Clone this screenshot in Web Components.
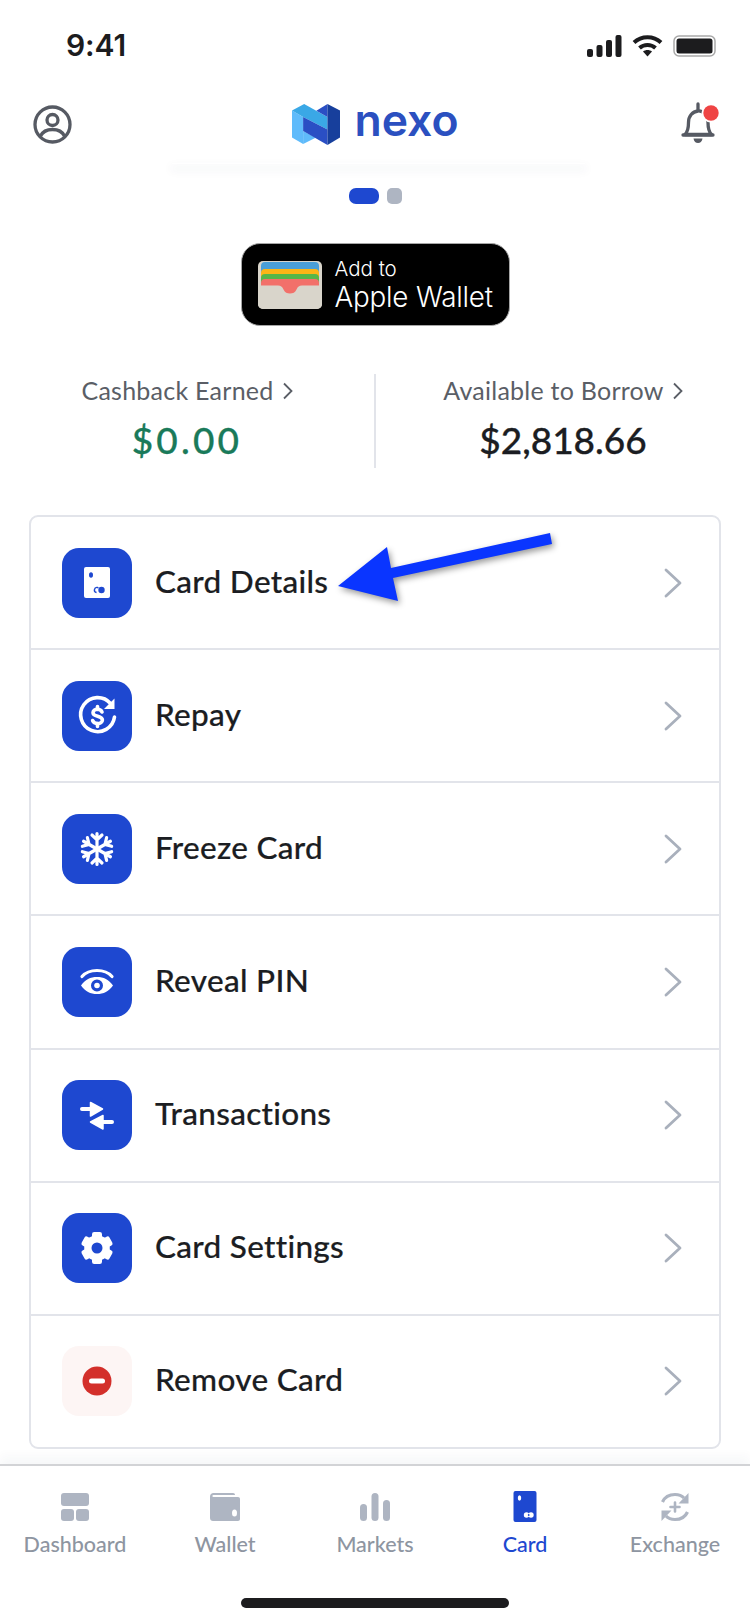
<!DOCTYPE html>
<html lang="en">
<head>
<meta charset="utf-8">
<title>Nexo Card</title>
<style>
  html, body { margin: 0; background: #fff; }
  body { font-family: Lato, "Liberation Sans", sans-serif; color: #1b1d22; }
</style>
</head>
<body>
<card-screen>
  <status-bar></status-bar>
  <app-header></app-header>
  <pager-dots></pager-dots>
  <wallet-button></wallet-button>

  <stat-pair>
    <stat-block slot="left" label="Cashback Earned" value="$0.00" tone="green"></stat-block>
    <stat-block slot="right" label="Available to Borrow" value="$2,818.66"></stat-block>
  </stat-pair>

  <menu-card>
    <menu-row>
      <svg slot="icon" viewBox="0 0 70 70" width="70" height="70">
        <rect x="22" y="19" width="26" height="31" rx="2" fill="#fff"/>
        <ellipse cx="29" cy="27" rx="2" ry="2.800" fill="#1e48d0"/>
        <circle cx="35" cy="42" r="2.600" fill="none" stroke="#1e48d0" stroke-width="1.400" stroke-dasharray="9 8" transform="rotate(100 35 42)"/>
        <circle cx="39.500" cy="42" r="3.200" fill="#1e48d0"/>
      </svg>
      Card Details
    </menu-row>
    <menu-row>
      <svg slot="icon" viewBox="0 0 70 70" width="70" height="70">
        <path d="M48.500 22.500A17 17 0 1 0 52.500 36" fill="none" stroke="#fff" stroke-width="3.600" stroke-linecap="round"/>
        <path d="M52.500 17.500v10.500h-10.500z" fill="#fff"/>
        <path d="M40 31c-.8-1.800-2.500-2.700-4.500-2.700-2.600 0-4.500 1.300-4.500 3.400 0 4.700 9.400 2.400 9.400 7.200 0 2.200-2.100 3.600-4.800 3.600-2.300 0-4.200-1-5-3" fill="none" stroke="#fff" stroke-width="3.600" stroke-linecap="round"/>
        <path d="M35.500 25.500v3M35.500 42.500v3" stroke="#fff" stroke-width="3.600" stroke-linecap="round"/>
      </svg>
      Repay
    </menu-row>
    <menu-row>
      <svg slot="icon" viewBox="0 0 70 70" width="70" height="70">
        <g fill="none" stroke="#fff" stroke-width="3.200" stroke-linecap="round" stroke-linejoin="round">
          <path d="M35 35V19.500M30 21l5 4.800 5-4.800"/>
          <path transform="rotate(60 35 35)" d="M35 35V19.500M30 21l5 4.800 5-4.800"/>
          <path transform="rotate(120 35 35)" d="M35 35V19.500M30 21l5 4.800 5-4.800"/>
          <path transform="rotate(180 35 35)" d="M35 35V19.500M30 21l5 4.800 5-4.800"/>
          <path transform="rotate(240 35 35)" d="M35 35V19.500M30 21l5 4.800 5-4.800"/>
          <path transform="rotate(300 35 35)" d="M35 35V19.500M30 21l5 4.800 5-4.800"/>
        </g>
      </svg>
      Freeze Card
    </menu-row>
    <menu-row>
      <svg slot="icon" viewBox="0 0 70 70" width="70" height="70">
        <path d="M20 29.500C24 25 29 23.500 35 23.500s11 1.500 15 6" fill="none" stroke="#fff" stroke-width="3.200" stroke-linecap="round"/>
        <path fill-rule="evenodd" fill="#fff" d="M19 38.500C23 32.500 28.500 30 35 30s12 2.500 16 8.500C47 44.500 41.500 47 35 47s-12-2.500-16-8.500zM35 32.500a6 6 0 1 0 0 12 6 6 0 0 0 0-12z"/>
        <circle cx="35" cy="38.500" r="2.800" fill="#fff"/>
      </svg>
      Reveal PIN
    </menu-row>
    <menu-row>
      <svg slot="icon" viewBox="0 0 70 70" width="70" height="70">
        <path d="M20 29h10M50 42H41" stroke="#fff" stroke-width="4" stroke-linecap="round"/>
        <path d="M28.500 22.500 40.500 29l-12 7zM41 35.500 28.500 42 41 49z" fill="#fff" stroke="#fff" stroke-width="1.500" stroke-linejoin="round"/>
      </svg>
      Transactions
    </menu-row>
    <menu-row>
      <svg slot="icon" viewBox="0 0 70 70" width="70" height="70">
        <circle cx="35" cy="35" r="12.800" fill="#fff"/>
        <g fill="#fff">
          <rect x="30" y="19" width="10" height="32" rx="2.200"/>
          <rect x="30" y="19" width="10" height="32" rx="2.200" transform="rotate(60 35 35)"/>
          <rect x="30" y="19" width="10" height="32" rx="2.200" transform="rotate(120 35 35)"/>
        </g>
        <circle cx="35" cy="35" r="5.500" fill="#1e48d0"/>
      </svg>
      Card Settings
    </menu-row>
    <menu-row danger>
      <svg slot="icon" viewBox="0 0 70 70" width="70" height="70">
        <circle cx="35" cy="35" r="14.500" fill="#d32f2a"/>
        <rect x="27" y="32.500" width="16" height="5" rx="2.500" fill="#fff"/>
      </svg>
      Remove Card
    </menu-row>
  </menu-card>

  <tab-bar>
    <tab-item label="Dashboard">
      <svg viewBox="0 0 40 34" width="40" height="34" fill="#aeb5c2">
        <rect x="6" y="3" width="28" height="13" rx="3"/>
        <rect x="6" y="19" width="13" height="12" rx="3"/>
        <rect x="21" y="19" width="13" height="12" rx="3"/>
      </svg>
    </tab-item>
    <tab-item label="Wallet">
      <svg viewBox="0 0 40 34" width="40" height="34">
        <path fill="#aeb5c2" fill-rule="evenodd" d="M5 6.500C5 4.500 6.500 3 8.500 3H28c1.300 0 2 .8 2 2H8.500C7 5 7 7 8.500 7H33c1.200 0 2 .8 2 2v20c0 1.200-.8 2-2 2H8c-1.700 0-3-1.300-3-3z"/>
        <ellipse cx="29.500" cy="23" rx="2.500" ry="3.500" fill="#fff"/>
      </svg>
    </tab-item>
    <tab-item label="Markets">
      <svg viewBox="0 0 40 34" width="40" height="34" fill="#aeb5c2">
        <rect x="5" y="14" width="7" height="17" rx="3.500"/>
        <rect x="16.500" y="3" width="7" height="28" rx="3.500"/>
        <rect x="28" y="10" width="7" height="21" rx="3.500"/>
      </svg>
    </tab-item>
    <tab-item label="Card" active>
      <svg viewBox="0 0 40 34" width="40" height="34">
        <rect x="8.500" y="1" width="23" height="31" rx="2" fill="#1e48d0"/>
        <ellipse cx="14.500" cy="8" rx="1.700" ry="2.700" fill="#fff"/>
        <circle cx="21.500" cy="25" r="2.700" fill="#fff"/>
        <circle cx="26" cy="25" r="2.700" fill="#fff"/>
        <circle cx="23.700" cy="25" r=".9" fill="#1e48d0"/>
      </svg>
    </tab-item>
    <tab-item label="Exchange">
      <svg viewBox="0 0 40 34" width="40" height="34" fill="none" stroke="#aeb5c2">
        <path d="M7.500 12C10 6.500 14.500 4.500 20 4.500c4 0 7 1.300 9 3.500" stroke-width="3.200"/>
        <path d="M33.500 3v10.500H23.500z" fill="#aeb5c2" stroke="none"/>
        <path d="M32.500 22C30 27.500 25.500 29.500 20 29.500c-4 0-7-1.300-9-3.500" stroke-width="3.200"/>
        <path d="M6.500 31V20.500H16.500z" fill="#aeb5c2" stroke="none"/>
        <path d="M20 12.500v9M15.500 17h9" stroke-width="2.600" stroke-linecap="round"/>
      </svg>
    </tab-item>
  </tab-bar>

  <home-indicator></home-indicator>
  <pointer-arrow></pointer-arrow>
</card-screen>

<script>
/** Small helper: every element below just stamps its markup into an open shadow root. */
class ShadowElement extends HTMLElement {
    constructor() {
        super();
        this.attachShadow({ mode: 'open' });
    }
    connectedCallback() {
        this.shadowRoot.innerHTML = this.markup();
    }
    markup() { return ''; }
}

class CardScreen extends ShadowElement {
    markup() {
        return `
        <style>
            :host {
                display: flex;
                flex-direction: column;
                position: relative;
                width: 750px;
                height: 1624px;
                overflow: hidden;
                background: #fff;
            }
        </style>
        <slot></slot>`;
    }
}

class StatusBar extends ShadowElement {
    markup() {
        return `
        <style>
            :host {
                display: flex;
                align-items: center;
                justify-content: space-between;
                height: 46px;
                padding: 23px 34px 11px 66px;
                flex: none;
            }
            .time {
                font: 600 30px/1 Inter, "Liberation Sans", sans-serif;
                color: #1c1c1e;
                letter-spacing: -.1px;
                margin-top: -2px;
            }
            .icons { display: flex; align-items: center; gap: 10px; }
            svg { display: block; }
        </style>
        <span class="time">9:41</span>
        <div class="icons">
            <svg width="35" height="22" viewBox="0 0 35 22" fill="#1c1c1e">
                <rect x="0" y="14" width="6" height="8" rx="2"/>
                <rect x="9.500" y="10" width="6" height="12" rx="2"/>
                <rect x="19" y="5" width="6" height="17" rx="2"/>
                <rect x="28.500" y="0" width="6" height="22" rx="2"/>
            </svg>
            <svg width="31" height="22" viewBox="0 0 31 22" fill="none" stroke="#1c1c1e" stroke-width="4">
                <path d="M2 7.500C9.500 .5 21.500 .5 29 7.500"/>
                <path d="M7.500 13c4.500-4 11.500-4 16 0"/>
                <path d="M11 16.500l4.500 5 4.500-5c-2.500-2-6.500-2-9 0z" fill="#1c1c1e" stroke="none"/>
            </svg>
            <svg width="43" height="22" viewBox="0 0 43 22">
                <rect x="1" y="1" width="41" height="20" rx="5" fill="none" stroke="#a9a9a9" stroke-width="1.500"/>
                <rect x="3.500" y="3.500" width="36" height="15" rx="2.500" fill="#1c1c1e"/>
            </svg>
        </div>`;
    }
}

class AppHeader extends ShadowElement {
    markup() {
        return `
        <style>
            :host {
                display: flex;
                align-items: center;
                justify-content: space-between;
                position: relative;
                height: 84px;
                box-sizing: border-box;
                padding: 4px 34px 0 33px;
                flex: none;
            }
            svg { display: block; }
            .logo { display: flex; align-items: center; gap: 14px; margin-left: -1px; }
            .word {
                font: 600 44.500px/1 Inter, Lato, sans-serif;
                color: #2b50c0;
                margin-top: -8px;
            }
            /* soft shadow under the header, narrower than the page */
            .shade {
                position: absolute;
                left: 172px;
                right: 165px;
                bottom: 0;
                height: 1px;
                box-shadow: 0 5px 10px 2px rgba(40, 50, 90, .055);
            }
        </style>
        <svg width="39" height="39" viewBox="0 0 39 39" fill="none" stroke="#565a63" stroke-width="3.300">
            <circle cx="19.500" cy="19.500" r="17.500"/>
            <circle cx="19.500" cy="15" r="5.500"/>
            <path d="M7.500 31c2.500-5 7-6.500 12-6.500s9.500 1.500 12 6.500"/>
        </svg>
        <div class="logo">
            <svg width="48" height="41" viewBox="20 12 138 126" preserveAspectRatio="none">
                <path d="M20 32 52 52V135L20 115Z" fill="#5fbbfb"/>
                <path d="M52 95 88 116 52 135Z" fill="#5fbbfb"/>
                <path d="M20 32 55 12 122 52V90L52 52Z" fill="#3aa8e6"/>
                <path d="M52 52 122 90V138L52 95Z" fill="#2a4fc4"/>
                <path d="M90 33 122 12V52Z" fill="#2a4fc4"/>
                <path d="M122 12 158 32V115L122 138Z" fill="#173f9c"/>
            </svg>
            <span class="word">nexo</span>
        </div>
        <svg width="40" height="44" viewBox="0 0 40 44" style="margin:-2px -4px 0 0">
            <path d="M5 33.500c3-3 3.500-6 3.500-12 0-6.500 4-11 9.500-11.500s10 5 10 11.500c0 6 .5 9 3.500 12z" fill="none" stroke="#565a63" stroke-width="3.300" stroke-linejoin="round"/>
            <path d="M3 34h30" stroke="#565a63" stroke-width="3.300" stroke-linecap="round"/>
            <path d="M18 3v6" stroke="#565a63" stroke-width="3.300" stroke-linecap="round"/>
            <path d="M13.500 37.500h9c-.5 3-2.200 4.500-4.500 4.500s-4-1.500-4.500-4.500z" fill="#565a63"/>
            <circle cx="31" cy="12" r="9.500" fill="#fff"/>
            <circle cx="31" cy="12" r="7.700" fill="#ef4444"/>
        </svg>
        <div class="shade"></div>`;
    }
}

class PagerDots extends ShadowElement {
    markup() {
        return `
        <style>
            :host { display: flex; justify-content: center; gap: 8px; margin: 24px 0 0 0; flex: none; }
            i { display: block; height: 16px; border-radius: 7px; }
            .on { width: 30px; background: #1e48d0; }
            .off { width: 15px; background: #aeb5c2; border-radius: 5px; }
        </style>
        <i class="on"></i><i class="off"></i>`;
    }
}

class WalletButton extends ShadowElement {
    markup() {
        return `
        <style>
            :host {
                display: flex;
                align-items: center;
                gap: 13px;
                box-sizing: border-box;
                width: 269px;
                height: 83px;
                margin: 39px auto 0;
                padding: 0 0 0 16px;
                background: #000;
                border: 1.500px solid #a6a6a6;
                border-radius: 19px;
                flex: none;
                color: #fff;
                font-family: Inter, "Liberation Sans", sans-serif;
                font-weight: 300;
            }
            .text { display: flex; flex-direction: column; }
            .small { font-size: 20.500px; line-height: 24px; margin-top: 1px; }
            .big { font-size: 27.800px; line-height: 32px; letter-spacing: -.2px; }
            svg { display: block; flex: none; }
        </style>
        <svg width="64" height="48" viewBox="0 0 64 48">
            <rect x="0" y="0" width="64" height="48" rx="5" fill="#d9d5cb"/>
            <path d="M3 12V5a4 4 0 0 1 4-4h50a4 4 0 0 1 4 4v7z" fill="#4a9fd8"/>
            <path d="M3 20v-8a4 4 0 0 1 4-4h50a4 4 0 0 1 4 4v8z" fill="#fbb516"/>
            <path d="M3 25v-8a4 4 0 0 1 4-4h50a4 4 0 0 1 4 4v8z" fill="#55b648"/>
            <path d="M3 34v-12a4 4 0 0 1 4-4h50a4 4 0 0 1 4 4v12z" fill="#f2706a"/>
            <path d="M0 24.500H20c3 0 4 1 5.500 4 1.500 3 3.500 4 6.500 4s5-1 6.500-4c1.500-3 2.500-4 5.500-4H64V43a5 5 0 0 1-5 5H5a5 5 0 0 1-5-5z" fill="#d9d5cb"/>
        </svg>
        <div class="text">
            <span class="small">Add to</span>
            <span class="big">Apple Wallet</span>
        </div>`;
    }
}

class StatPair extends ShadowElement {
    markup() {
        return `
        <style>
            :host {
                display: grid;
                grid-template-columns: 1fr 2px 1fr;
                height: 94px;
                margin-top: 48px;
                flex: none;
            }
            .rule { background: #e2e4ea; }
        </style>
        <slot name="left"></slot>
        <div class="rule"></div>
        <slot name="right"></slot>`;
    }
}

class StatBlock extends ShadowElement {
    markup() {
        const green = this.getAttribute('tone') === 'green';
        return `
        <style>
            :host {
                display: flex;
                flex-direction: column;
                align-items: center;
                gap: 13px;
                padding-top: 1px;
            }
            .label {
                display: flex;
                align-items: center;
                gap: 9px;
                font-size: 25px;
                line-height: 30px;
                letter-spacing: .25px;
                color: #5a5e66;
            }
            .value {
                font-size: 37px;
                line-height: 44px;
                font-weight: 500;
                letter-spacing: ${green ? '3.200px' : '0'};
                color: ${green ? '#1a7a5a' : '#1b1d22'};
                -webkit-text-stroke: .3px currentColor;
            }
            svg { display: block; margin-top: 2px; }
        </style>
        <div class="label">
            <span>${this.getAttribute('label')}</span>
            <svg width="10" height="18" viewBox="0 0 10 18" fill="none" stroke="#5a5e66" stroke-width="1.800"><path d="M1 1.500 8.500 9 1 16.500"/></svg>
        </div>
        <div class="value">${this.getAttribute('value')}</div>`;
    }
}

class MenuCard extends ShadowElement {
    markup() {
        return `
        <style>
            :host {
                display: flex;
                flex-direction: column;
                box-sizing: border-box;
                height: 934px;
                margin: 47px 29px 0 29px;
                border: 2px solid #e2e4ea;
                border-radius: 9px;
                background: #fff;
                flex: none;
            }
            ::slotted(menu-row:not(:last-child)) { border-bottom: 2px solid #e2e4ea; }
        </style>
        <slot></slot>`;
    }
}

class MenuRow extends ShadowElement {
    markup() {
        return `
        <style>
            :host {
                display: flex;
                flex: 1;
                align-items: center;
                gap: 23px;
                padding: 0 36px 0 31px;
                font-size: 31.500px;
                font-weight: 500;
                letter-spacing: .3px;
                color: #1b1d22;
            }
            .tile {
                width: 70px;
                height: 70px;
                border-radius: 17px;
                background: #1e48d0;
                flex: none;
            }
            :host([danger]) .tile { background: #fdf5f4; }
            .text { flex: 1; margin-top: -4px; -webkit-text-stroke: .2px currentColor; }
            ::slotted(svg), svg { display: block; }
        </style>
        <div class="tile"><slot name="icon"></slot></div>
        <div class="text"><slot></slot></div>
        <svg width="20" height="32" viewBox="0 0 20 32" fill="none" stroke="#a9b0bc" stroke-width="2.800" stroke-linecap="round" stroke-linejoin="round"><path d="M3 3 17 16 3 29"/></svg>`;
    }
}

class TabBar extends ShadowElement {
    markup() {
        return `
        <style>
            :host {
                display: grid;
                grid-template-columns: repeat(5, 1fr);
                box-sizing: border-box;
                height: 100px;
                margin-top: 15px;
                padding-top: 24px;
                border-top: 2px solid #d2d3d6;
                box-shadow: 0 -8px 10px rgba(40, 50, 90, .035);
                background: #fff;
                flex: none;
            }
        </style>
        <slot></slot>`;
    }
}

class TabItem extends ShadowElement {
    markup() {
        return `
        <style>
            :host {
                display: flex;
                flex-direction: column;
                align-items: center;
                gap: 6px;
                font-size: 21.500px;
                line-height: 28px;
                font-weight: 500;
                color: #8e95a1;
            }
            :host([active]) { color: #1e48d0; }
            ::slotted(svg) { display: block; }
        </style>
        <slot></slot>
        <span>${this.getAttribute('label')}</span>`;
    }
}

class HomeIndicator extends ShadowElement {
    markup() {
        return `
        <style>
            :host { display: flex; justify-content: center; margin-top: 34px; flex: none; }
            i { display: block; width: 268px; height: 10px; border-radius: 5px; background: #1c1c1e; }
        </style>
        <i></i>`;
    }
}

// The annotation arrow drawn over the first row of the screenshot.
class PointerArrow extends ShadowElement {
    markup() {
        return `
        <style>
            :host { position: absolute; left: 330px; top: 525px; width: 230px; height: 85px; pointer-events: none; }
            svg { display: block; overflow: visible; filter: drop-shadow(2px 3px 3px rgba(0, 0, 0, .4)); }
        </style>
        <svg width="230" height="85" viewBox="330 525 230 85">
            <path d="M338 586 387 547 391 568 550 533 552 544 393 578 398 601Z" fill="#0a35ff"/>
        </svg>`;
    }
}

customElements.define('card-screen', CardScreen);
customElements.define('status-bar', StatusBar);
customElements.define('app-header', AppHeader);
customElements.define('pager-dots', PagerDots);
customElements.define('wallet-button', WalletButton);
customElements.define('stat-pair', StatPair);
customElements.define('stat-block', StatBlock);
customElements.define('menu-card', MenuCard);
customElements.define('menu-row', MenuRow);
customElements.define('tab-bar', TabBar);
customElements.define('tab-item', TabItem);
customElements.define('home-indicator', HomeIndicator);
customElements.define('pointer-arrow', PointerArrow);
</script>
</body>
</html>
